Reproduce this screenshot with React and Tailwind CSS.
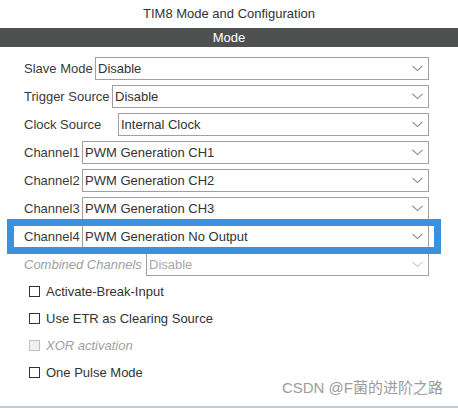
import React from "react";

const FONT = { fontFamily: '"Liberation Sans", Arial, sans-serif' };

const Chevron = ({ light }) => (
  <svg width="11" height="7" viewBox="0 0 11 7" className="shrink-0">
    <path
      d="M0.5 0.8 L5.5 5.6 L10.5 0.8"
      fill="none"
      stroke={light ? "#c8c8c8" : "#8a8a8a"}
      strokeWidth="1.1"
    />
  </svg>
);

const SelectRow = ({ label, labelW, value, disabled }) => (
  <div className="flex h-[23px] items-center">
    <span
      className={`shrink-0 text-[13px] ${labelW} ${
        disabled ? "italic text-[#a0a0a0]" : "text-[#3a3a3a]"
      }`}
    >
      {label}
    </span>
    <div className="flex h-[23px] flex-1 items-center justify-between border border-[#a0a0a0] bg-white pl-[2px] pr-[5px]">
      <span
        className={`text-[13px] ${disabled ? "text-[#a8a8a8]" : "text-[#333]"}`}
      >
        {value}
      </span>
      <Chevron light={disabled} />
    </div>
  </div>
);

const Check = ({ label, disabled }) => (
  <div className="flex h-[27px] items-center pl-[29px]">
    <span
      className={`h-[11px] w-[11px] shrink-0 border ${
        disabled ? "border-[#c0c0c0] bg-[#f0f0f0]" : "border-[#333] bg-white"
      }`}
    />
    <span
      className={`ml-[6px] text-[13px] ${
        disabled ? "italic text-[#a0a0a0]" : "text-[#333]"
      }`}
    >
      {label}
    </span>
  </div>
);

export default function App() {
  return (
    <div
      style={FONT}
      className="relative h-[408px] w-[458px] overflow-hidden bg-white"
    >
      <div className="flex h-[28px] items-center justify-center text-[13px] text-[#333]">
        TIM8 Mode and Configuration
      </div>
      <div className="flex h-[19px] items-center justify-center bg-[#4f5151] text-[13px] text-white">
        Mode
      </div>

      <div className="flex flex-col gap-[5px] pl-[24px] pr-[29px] pt-[10px]">
        <SelectRow label="Slave Mode" labelW="w-[71px]" value="Disable" />
        <SelectRow label="Trigger Source" labelW="w-[88px]" value="Disable" />
        <SelectRow label="Clock Source" labelW="w-[94px]" value="Internal Clock" />
        <SelectRow label="Channel1" labelW="w-[58px]" value="PWM Generation CH1" />
        <SelectRow label="Channel2" labelW="w-[58px]" value="PWM Generation CH2" />
        <SelectRow label="Channel3" labelW="w-[58px]" value="PWM Generation CH3" />
        <SelectRow label="Channel4" labelW="w-[58px]" value="PWM Generation No Output" />
        <SelectRow
          label="Combined Channels"
          labelW="w-[122px]"
          value="Disable"
          disabled
        />
      </div>

      <div className="mt-[2px] flex flex-col">
        <Check label="Activate-Break-Input" />
        <Check label="Use ETR as Clearing Source" />
        <Check label="XOR activation" disabled />
        <Check label="One Pulse Mode" />
      </div>

      {/* highlight box around Channel4 */}
      <div className="pointer-events-none absolute left-[7px] top-[219px] h-[35px] w-[434px] border-[7px] border-[#3a91e0]" />

      {/* watermark */}
      <div
        className="absolute right-[15px] top-[377px] text-[15px] text-[#9c9c9c]"
        style={{ fontFamily: '"Liberation Sans", "Noto Sans CJK SC", sans-serif' }}
      >
        CSDN @F菌的进阶之路
      </div>

      <div className="absolute bottom-0 left-0 h-[2px] w-full bg-[#c6cacd]" />
    </div>
  );
}
